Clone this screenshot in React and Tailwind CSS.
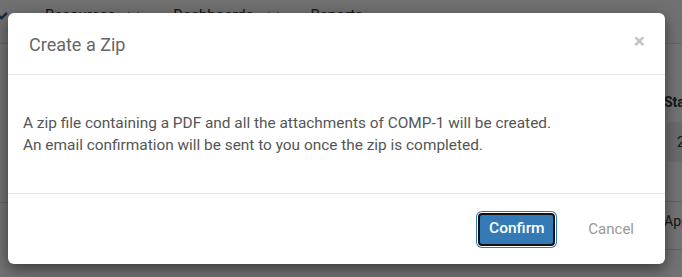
import React from "react";

const Chevron = ({ className }) => (
  <svg viewBox="0 0 12 8" className={className} fill="none" stroke="currentColor" strokeWidth="2.2">
    <path d="M1 1.5l5 5 5-5" />
  </svg>
);

const App = () => {
  return (
    <div
      className="relative w-[682px] h-[277px] overflow-hidden bg-white"
      style={{ fontFamily: "Roboto, 'Liberation Sans', sans-serif" }}
    >
      {/* Page behind the modal */}
      <div className="flex flex-col h-full">
        <div className="h-[44px] shrink-0 flex items-start border-b border-[#ddd] bg-[#fafafa]">
          <div className="flex items-center pt-[4px] text-[15px] text-[#333]">
            <Chevron className="w-[13px] h-[9px] -ml-[5px] text-[#2a6496]" />
            <span className="ml-[37px]">Resources</span>
            <Chevron className="w-[13px] h-[9px] ml-[12px] text-[#2a6496]" />
            <span className="ml-[33px]">Dashboards</span>
            <Chevron className="w-[13px] h-[9px] ml-[13px] text-[#2a6496]" />
            <span className="ml-[31px]">Reports</span>
          </div>
        </div>
        <div className="flex flex-1">
          <div className="w-[664px] shrink-0 flex flex-col">
            <div className="h-[159px] border-b border-[#ddd]" />
          </div>
          <div className="flex flex-col w-[80px] shrink-0">
            <div className="h-[78px] flex items-end pb-[9px] text-[14px] font-bold text-[#333] whitespace-nowrap">
              Status
            </div>
            <div className="ml-[3px] h-[40px] w-[70px] rounded-[4px] bg-[#eee] flex items-center pl-[10px] text-[14px] text-[#333]">
              2
            </div>
            <div className="h-[40px] border-b border-[#ddd]" />
            <div className="h-[48px] flex items-center pb-[8px] text-[14px] text-[#333] border-b border-[#ddd]">
              Approved
            </div>
          </div>
        </div>
      </div>

      {/* Overlay */}
      <div className="absolute inset-0 bg-black/[0.55]" />

      {/* Modal */}
      <div className="absolute left-[8px] top-[13px] w-[657px] h-[251px] bg-white rounded-[6px] shadow-[0_5px_15px_rgba(0,0,0,0.5)] flex flex-col">
        <div className="h-[62px] shrink-0 flex items-center justify-between pl-[21px] pr-[20px] border-b border-[#e5e5e5]">
          <h4 className="text-[18px] text-[#666] font-normal pt-[2px]">Create a Zip</h4>
          <span className="text-[21px] leading-none font-bold text-[#c4c4c4] mt-[-4px]">×</span>
        </div>
        <div className="flex-1 flex flex-col justify-center px-[15px] text-[15.4px] leading-[22px] text-[#555]">
          <p>A zip file containing a PDF and all the attachments of COMP-1 will be created.</p>
          <p>An email confirmation will be sent to you once the zip is completed.</p>
        </div>
        <div className="h-[71px] shrink-0 flex items-center justify-end gap-[33px] pr-[31px] border-t border-[#e5e5e5]">
          <button className="h-[33px] w-[77px] rounded-[4px] bg-[#337ab7] border-2 border-[#111] text-white text-[15.5px] font-medium shadow-[0_0_0_1px_#fff,0_0_0_2px_#337ab7]">
            Confirm
          </button>
          <button className="text-[15px] text-[#999]">Cancel</button>
        </div>
      </div>
    </div>
  );
};

export default App;
